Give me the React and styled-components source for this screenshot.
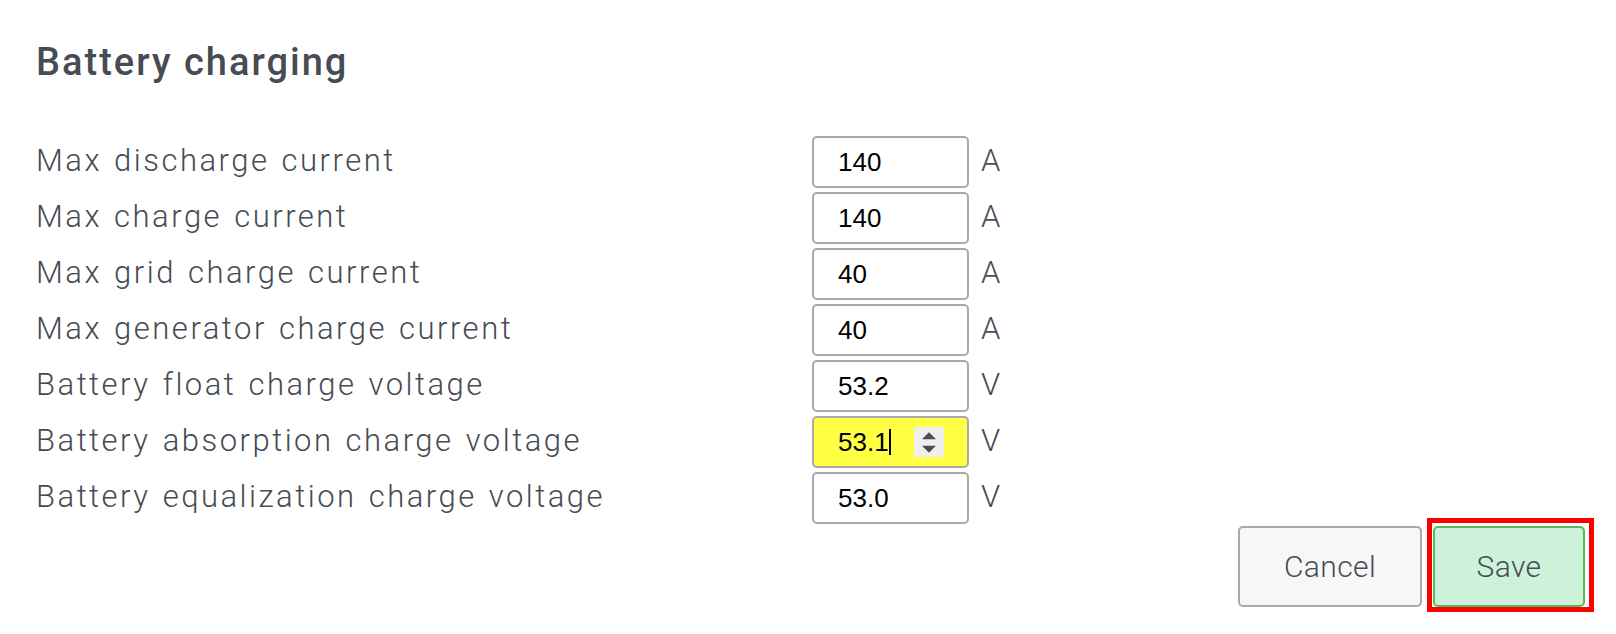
import React from "react";
import styled, { createGlobalStyle } from "styled-components";

const Global = createGlobalStyle`
  html, body { margin: 0; padding: 0; background: #ffffff; }
  body { font-family: "Roboto", "Liberation Sans", sans-serif; }
`;

const Page = styled.div`
  width: 1616px;
  height: 634px;
  box-sizing: border-box;
  padding: 39px 31px 0 36px;
  display: flex;
  flex-direction: column;
  overflow: hidden;
`;

const Title = styled.h2`
  margin: 0;
  font-family: "Roboto", "Liberation Sans", sans-serif;
  font-weight: 500;
  font-size: 38px;
  line-height: 46px;
  letter-spacing: 2px;
  color: #474b54;
`;

const Form = styled.div`
  margin-top: 51px;
  display: grid;
  grid-template-columns: 776px 157px auto;
  grid-auto-rows: 52px;
  row-gap: 4px;
  align-items: center;
`;

const Label = styled.div`
  font-family: "Roboto", "Liberation Sans", sans-serif;
  font-weight: 300;
  font-size: 31px;
  line-height: 52px;
  letter-spacing: 2.5px;
  word-spacing: 2px;
  color: #474b54;
  white-space: nowrap;
  transform: translateY(-1px);
`;

const FieldBox = styled.div`
  box-sizing: border-box;
  height: 52px;
  width: 157px;
  border: 2px solid #a9a9a9;
  border-radius: 5px;
  background: ${(p) => (p.$active ? "#ffff44" : "#ffffff")};
  display: flex;
  align-items: center;
  padding: 0 23px 0 24px;
  font-family: "Liberation Sans", Arial, sans-serif;
  font-size: 26px;
  color: #000000;
`;

const Caret = styled.span`
  display: inline-block;
  width: 2px;
  height: 26px;
  background: #000;
`;

const Spinner = styled.span`
  margin-left: auto;
  width: 30px;
  height: 30px;
  background: #efefef;
  display: flex;
  align-items: center;
  justify-content: center;
`;

const Unit = styled.div`
  margin-left: 12px;
  font-family: "Roboto", "Liberation Sans", sans-serif;
  font-weight: 300;
  font-size: 31px;
  line-height: 52px;
  color: #474b54;
  transform: translateY(-1px);
`;

const Actions = styled.div`
  margin-top: 2px;
  display: flex;
  justify-content: flex-end;
  gap: 11px;
`;

const Button = styled.button`
  position: relative;
  box-sizing: border-box;
  height: 81px;
  width: ${(p) => p.$w}px;
  border-radius: 5px;
  border: 2px solid ${(p) => (p.$primary ? "#5cb85c" : "#a9a9a9")};
  background: ${(p) => (p.$primary ? "#cdf2da" : "#f7f7f7")};
  font-family: "Roboto", "Liberation Sans", sans-serif;
  font-weight: 300;
  font-size: 30px;
  letter-spacing: 0.4px;
  color: #474b54;
  padding: 0;
  cursor: pointer;

  ${(p) =>
    p.$highlight &&
    `
    &::after {
      content: "";
      position: absolute;
      top: -10px;
      left: -8px;
      right: -11px;
      bottom: -7px;
      border: 5px solid #ff0000;
      pointer-events: none;
    }
  `}
`;

const rows = [
  { label: "Max discharge current", value: "140", unit: "A" },
  { label: "Max charge current", value: "140", unit: "A" },
  { label: "Max grid charge current", value: "40", unit: "A" },
  { label: "Max generator charge current", value: "40", unit: "A" },
  { label: "Battery float charge voltage", value: "53.2", unit: "V" },
  { label: "Battery absorption charge voltage", value: "53.1", unit: "V", active: true },
  { label: "Battery equalization charge voltage", value: "53.0", unit: "V" },
];

function SpinIcon() {
  return (
    <svg width="30" height="30" viewBox="0 0 30 30">
      <polygon points="8,12.3 22,12.3 15,5.3" fill="#4d4d4d" />
      <polygon points="8,18.7 22,18.7 15,25.7" fill="#4d4d4d" />
    </svg>
  );
}

export default function App() {
  return (
    <>
      <Global />
      <Page>
        <Title>Battery charging</Title>
        <Form>
          {rows.map((r) => (
            <React.Fragment key={r.label}>
              <Label>{r.label}</Label>
              <FieldBox $active={r.active}>
                <span>{r.value}</span>
                {r.active && <Caret />}
                {r.active && (
                  <Spinner>
                    <SpinIcon />
                  </Spinner>
                )}
              </FieldBox>
              <Unit>{r.unit}</Unit>
            </React.Fragment>
          ))}
        </Form>
        <Actions>
          <Button $w={184}>Cancel</Button>
          <Button $w={152} $primary $highlight>
            Save
          </Button>
        </Actions>
      </Page>
    </>
  );
}
